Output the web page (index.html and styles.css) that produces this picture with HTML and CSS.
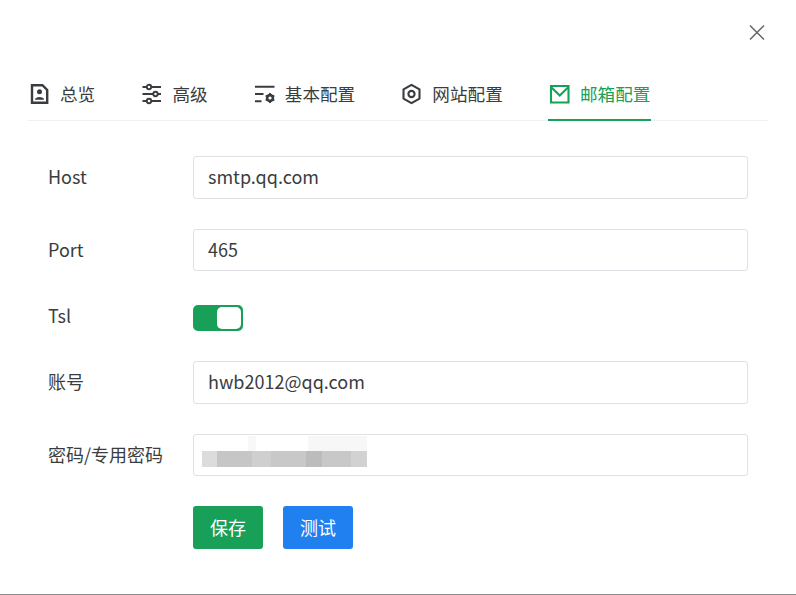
FILE: index.html
```html
<!DOCTYPE html>
<html lang="zh-CN">
<head>
<meta charset="utf-8">
<title>邮箱配置</title>
<link rel="stylesheet" href="styles.css">
</head>
<body>
<div class="dialog">
  <div class="top">
    <button class="close" aria-label="关闭">
      <svg viewBox="0 0 16 16" width="16" height="16"><path d="M1 1.5 15 15.5M15 1.5 1 15.5" fill="none" stroke="#666" stroke-width="1.5"/></svg>
    </button>
  </div>
  <nav class="tabs">
    <div class="tab">
      <svg class="icon" viewBox="0 0 22 22"><path d="M4 2.2H14.5L19.2 6.9V19.8H4Z" fill="none" stroke="currentColor" stroke-width="2.4"/><circle cx="11.5" cy="8.8" r="2.5" fill="currentColor"/><path d="M6.8 16.8C7.2 13.2 15.8 13.2 16.2 16.8Z" fill="currentColor"/></svg>
      <span>总览</span>
    </div>
    <div class="tab">
      <svg class="icon" viewBox="0 0 22 22"><path d="M2.5 4H6.5M11.5 4H21M2.5 11H13M18 11H21M2.5 18H6.5M11.5 18H21" fill="none" stroke="currentColor" stroke-width="2"/><circle cx="9" cy="4" r="2.2" fill="none" stroke="currentColor" stroke-width="1.9"/><circle cx="15.5" cy="11" r="2.2" fill="none" stroke="currentColor" stroke-width="1.9"/><circle cx="9" cy="18" r="2.2" fill="none" stroke="currentColor" stroke-width="1.9"/></svg>
      <span>高级</span>
    </div>
    <div class="tab">
      <svg class="icon" viewBox="0 0 22 22"><path d="M2 3.8H21.5M2 11H10.5M2 18.2H8.5" fill="none" stroke="currentColor" stroke-width="2"/><circle cx="17" cy="15" r="2.9" fill="none" stroke="currentColor" stroke-width="2.6"/><path d="M17 10V12M17 18V20M12.7 12.5 14.4 13.5M19.6 16.5 21.3 17.5M21.3 12.5 19.6 13.5M14.4 16.5 12.7 17.5" stroke="currentColor" stroke-width="1.9"/></svg>
      <span>基本配置</span>
    </div>
    <div class="tab">
      <svg class="icon" viewBox="0 0 22 22"><path d="M11.5 1.8 19.5 6.4V15.6L11.5 20.2 3.5 15.6V6.4Z" fill="none" stroke="currentColor" stroke-width="2.1" stroke-linejoin="round"/><circle cx="11.5" cy="11" r="3.1" fill="none" stroke="currentColor" stroke-width="2.1"/></svg>
      <span>网站配置</span>
    </div>
    <div class="tab active">
      <svg class="icon" viewBox="0 0 22 22"><path d="M3 3H20.5V19.5H3Z" fill="none" stroke="currentColor" stroke-width="2.1"/><path d="M3.5 4.5 11.75 12.5 20 4.5" fill="none" stroke="currentColor" stroke-width="2.1"/></svg>
      <span>邮箱配置</span>
    </div>
  </nav>
  <form class="form">
    <div class="row">
      <label class="label">Host</label>
      <div class="input">smtp.qq.com</div>
    </div>
    <div class="row">
      <label class="label">Port</label>
      <div class="input">465</div>
    </div>
    <div class="row row-switch">
      <label class="label label-switch">Tsl</label>
      <div class="switch"><span class="thumb"></span></div>
    </div>
    <div class="row">
      <label class="label">账号</label>
      <div class="input">hwb2012@qq.com</div>
    </div>
    <div class="row">
      <label class="label">密码/专用密码</label>
      <div class="input input-secret"><span class="blur"></span></div>
    </div>
    <div class="row">
      <span class="label"></span>
      <div class="actions">
        <button type="button" class="btn btn-save">保存</button>
        <button type="button" class="btn btn-test">测试</button>
      </div>
    </div>
  </form>
</div>
</body>
</html>
```
FILE: styles.css
```css
* { box-sizing: border-box; }
html, body { margin: 0; padding: 0; }
body {
  width: 796px;
  height: 595px;
  background: #fff;
  color: #3a3d40;
  font-family: "Noto Sans CJK SC", "Noto Sans", sans-serif;
  font-size: 18px;
  overflow: hidden;
}
.dialog {
  height: 595px;
  padding: 0 28px;
  border-bottom: 1px solid #8c8c8c;
}
.top {
  height: 72px;
  display: flex;
  justify-content: flex-end;
  padding: 24px 3px 0 0;
}
.close {
  width: 16px;
  height: 16px;
  padding: 0;
  border: 0;
  background: none;
  display: block;
}
.close svg { display: block; }
.tabs {
  display: flex;
  gap: 44.7px;
  height: 49px;
  border-bottom: 1px solid #efeff5;
}
.tab {
  display: flex;
  align-items: center;
  gap: 10px;
  height: 49px;
  font-size: 17.6px;
  line-height: 44px;
  padding-bottom: 5px;
  white-space: nowrap;
}
.tab span { margin-right: 0.5px; }
.tab.active {
  color: #18a058;
  border-bottom: 2px solid #18a058;
  padding-bottom: 3px;
}
.icon {
  width: 22px;
  height: 22px;
  display: block;
  flex: none;
}
.form {
  display: flex;
  flex-direction: column;
  gap: 30px;
  padding: 35px 20px 0;
}
.row {
  display: flex;
  align-items: center;
  height: 42.5px;
}
.row-switch {
  height: 30px;
  align-items: flex-end;
}
.label {
  width: 145px;
  flex: none;
  line-height: 26px;
  padding-bottom: 2px;
  white-space: nowrap;
}
.label-switch {
  padding-bottom: 3px;
  line-height: 26px;
}
.input {
  flex: 1;
  height: 100%;
  display: flex;
  align-items: center;
  padding: 0 14px 2px;
  border: 1px solid #e0e0e6;
  border-radius: 3px;
  white-space: nowrap;
}
.input-secret {
  padding: 0 0 0 8px;
  align-items: flex-end;
}
.blur {
  width: 165px;
  height: 31px;
  margin-bottom: 8px;
  background-repeat: no-repeat;
  background-position: 0 100%, 0 0;
  background-size: 100% 16px, 100% 15px;
  background-image:
    linear-gradient(90deg, #dcdcdc 0 9%, #c6c6c6 9% 30%, #cfcfcf 30% 42%, #c8c8c8 42% 63%, #bcbcbc 63% 73%, #c8c8c8 73% 90%, #d2d2d2 90% 100%),
    linear-gradient(90deg, #fff 0 28%, #f8f8f8 28% 33%, #fff 33% 64%, #f7f7f7 64% 100%);
}
.switch {
  width: 50px;
  height: 26px;
  padding: 2px;
  display: flex;
  justify-content: flex-end;
  border-radius: 5px;
  background: #18a058;
}
.thumb {
  width: 24px;
  height: 22px;
  background: #fff;
  border-radius: 5px;
}
.actions {
  display: flex;
  gap: 20px;
  height: 100%;
}
.btn {
  width: 70px;
  height: 100%;
  padding: 0;
  border: 0;
  border-radius: 3px;
  color: #fff;
  font: inherit;
}
.btn-save { background: #18a058; }
.btn-test { background: #2080f0; }
```
